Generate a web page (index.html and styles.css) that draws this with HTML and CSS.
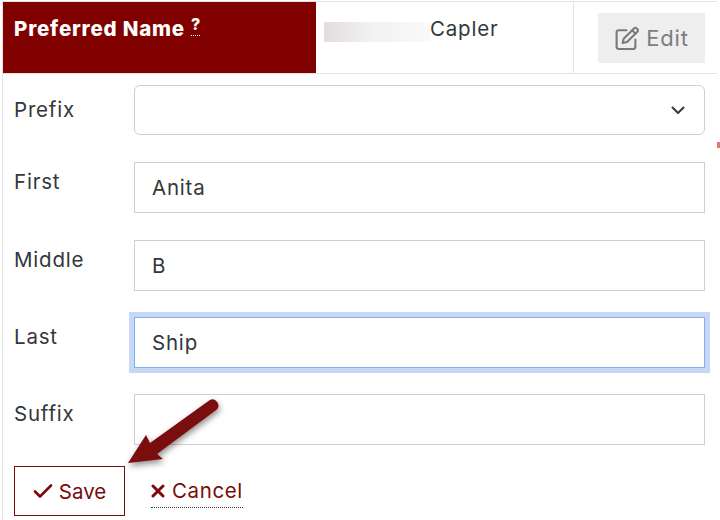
FILE: index.html
```html
<!DOCTYPE html>
<html lang="en">
<head>
<meta charset="utf-8">
<title>Preferred Name</title>
<link rel="stylesheet" href="styles.css">
</head>
<body>
<div class="panel">
  <header class="head">
    <div class="title"><span class="title-text">Preferred Name</span><span class="help">?</span></div>
    <div class="value"><span class="redact"></span><span>Capler</span></div>
    <div class="action">
      <button class="edit" type="button">
        <svg class="edit-icon" viewBox="0 0 24 24" width="25" height="25" fill="none" stroke="#7a7a7a" stroke-width="2" stroke-linecap="round" stroke-linejoin="round"><path d="M12 4H4.5A2 2 0 0 0 2.500 6v14a2 2 0 0 0 2 2h14a2 2 0 0 0 2-2v-7"/><path d="M19.200 2.300a1.800 1.800 0 0 1 2.600 0l.6.6a1.800 1.800 0 0 1 0 2.600L12.500 15.400l-4.200 1 1-4.200z"/><path d="M17.500 4.200l3.200 3.200"/></svg>
        <span>Edit</span>
      </button>
    </div>
  </header>
  <form class="form">
    <div class="row row-select">
      <label class="label">Prefix</label>
      <div class="select">
        <svg viewBox="0 0 14 9" width="14" height="9" fill="none" stroke="#33373a" stroke-width="2" stroke-linecap="round" stroke-linejoin="round"><path d="M1.500 1.500 7 7l5.500-5.500"/></svg>
      </div>
    </div>
    <div class="row"><label class="label">First</label><div class="input">Anita</div></div>
    <div class="row"><label class="label">Middle</label><div class="input">B</div></div>
    <div class="row"><label class="label">Last</label><div class="input focus">Ship</div></div>
    <div class="row"><label class="label">Suffix</label><div class="input"></div></div>
    <div class="buttons">
      <button class="save" type="button">
        <svg viewBox="0 0 20 16" width="20" height="16" fill="none" stroke="#7c0a0a" stroke-width="2.600" stroke-linecap="round" stroke-linejoin="round"><path d="M2 8.500 7 13.500 18 2.500"/></svg>
        <span>Save</span>
      </button>
      <a class="cancel"><svg viewBox="0 0 14 14" width="14" height="14" fill="none" stroke="#7c0a0a" stroke-width="3" stroke-linecap="round"><path d="M2 2l10 10M12 2 2 12"/></svg><span>Cancel</span></a>
    </div>
  </form>
</div>
<span class="speck"></span>
<svg class="arrow" viewBox="0 0 110 85" width="110" height="85">
  <defs><filter id="sh" x="-20%" y="-20%" width="150%" height="150%"><feDropShadow dx="1" dy="3" stdDeviation="3" flood-color="#000" flood-opacity=".45"/></filter></defs>
  <path filter="url(#sh)" fill="#7a0a0e" d="M8 68 26 40 30 48 89.500 5.200A6 6 0 0 1 96.500 14.800L37 59 43 64z"/>
</svg>
</body>
</html>
```
FILE: styles.css
```css
* { box-sizing: border-box; }
html, body { margin: 0; height: 100%; background: #fff; }
body {
  width: 720px;
  height: 520px;
  overflow: hidden;
  position: relative;
  font-family: Inter, "Liberation Sans", sans-serif;
  color: #33373a;
  font-size: 20.5px;
  letter-spacing: .8px;
}
.panel {
  margin: 1px 0 0 2px;
  width: 715px;
  height: 519px;
  border-top: 1px solid #e3e3e3;
  border-left: 1px solid #e3e3e3;
}
.head {
  display: flex;
  height: 72px;
  border-bottom: 1px solid #e3e3e3;
}
.title {
  width: 313px;
  background: #800000;
  color: #fff;
  font-weight: 800;
  font-size: 20.5px;
  letter-spacing: .8px;
  padding: 14px 0 0 11px;
  display: flex;
  align-items: flex-start;
}
.title-text { line-height: 26px; }
.help {
  margin: -2px 0 0 6px;
  font-size: 16px;
  letter-spacing: 0;
  line-height: 20px;
  height: 22px;
  border-bottom: 1px dotted #fff;
}
.value {
  width: 257px;
  display: flex;
  align-items: flex-start;
  padding: 15px 0 0 8px;
  line-height: 24px;
}
.redact {
  width: 106px;
  height: 20px;
  margin-top: 5px;
  background: linear-gradient(90deg, #e2dcdd, #f3f1f1 45%, #fafafa);
}
.action {
  flex: 1;
  border-left: 1px solid #e3e3e3;
  padding: 11px 0 0 24px;
}
.edit {
  width: 107px;
  height: 50px;
  border: 0;
  background: #eeeeee;
  color: #7d7d7d;
  font: inherit;
  font-size: 22px;
  letter-spacing: .8px;
  display: flex;
  align-items: center;
  justify-content: center;
  gap: 7px;
  padding: 0;
}
.form {
  padding: 11px 12px 0 11px;
}
.row {
  display: flex;
  height: 51px;
  margin-bottom: 26.25px;
}
.label {
  width: 120px;
  flex: none;
  line-height: 24px;
  padding-top: 8px;
}
.row-select .label { padding-top: 13px; }
.input, .select {
  flex: 1;
  height: 51px;
  border: 1px solid #cfcfcf;
  padding-left: 17px;
  line-height: 49px;
  background: #fff;
}
.select {
  height: 50px;
  border-radius: 6px;
  display: flex;
  align-items: center;
  justify-content: flex-end;
  padding-right: 19px;
}
.focus {
  border-color: #80aee8;
  box-shadow: 0 0 0 5px #c5d9f7;
}
.buttons {
  display: flex;
  align-items: center;
  gap: 26px;
  margin-top: -5.25px;
}
.save {
  width: 111px;
  height: 50px;
  background: #fff;
  border: 1px solid #7c0a0a;
  color: #7c0a0a;
  font: inherit;
  display: flex;
  align-items: center;
  justify-content: center;
  gap: 6px;
  padding: 0;
}
.cancel {
  color: #7c0a0a;
  display: flex;
  align-items: center;
  gap: 7px;
  height: 34px;
  letter-spacing: .6px;
  border-bottom: 1px dotted #333;
}
.arrow {
  position: absolute;
  left: 120px;
  top: 395px;
}
.speck {
  position: absolute;
  left: 717px;
  top: 142px;
  width: 3px;
  height: 6px;
  background: #e07a70;
}
```
